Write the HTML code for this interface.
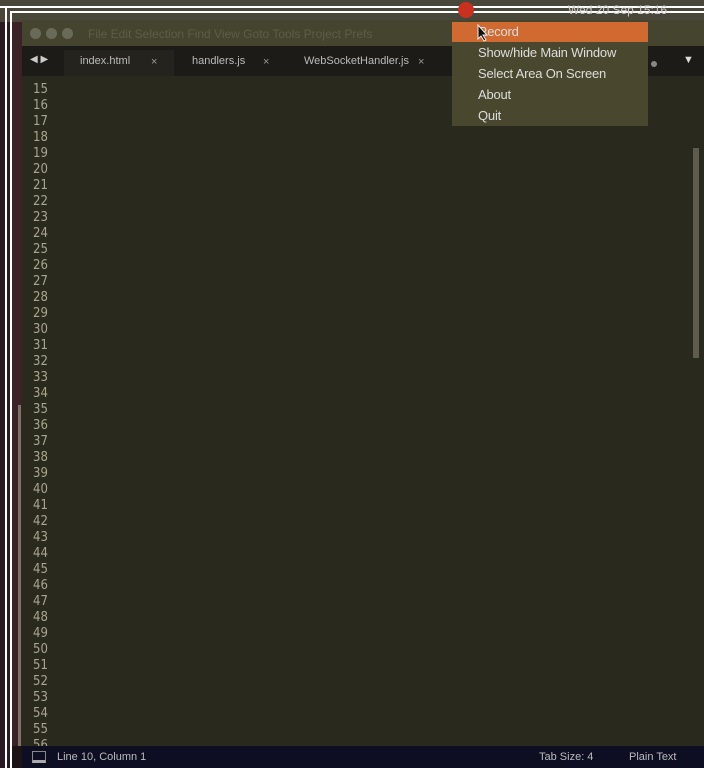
<!DOCTYPE html><html><head><style>
*{margin:0;padding:0;box-sizing:border-box}
body{width:704px;height:768px;background:#1a1414;position:relative;overflow:hidden;font-family:"Liberation Sans",sans-serif}
.a{position:absolute}
</style></head><body>
<div class="a" style="left:0;top:0;width:704px;height:22px;background:#48473a"></div>
<div class="a" style="left:0;top:22px;width:12px;height:746px;background:#2a1a22"></div>
<div class="a" style="left:12px;top:22px;width:10px;height:724px;background:#3a2226"></div>
<div class="a" style="left:18px;top:405px;width:3px;height:341px;background:#7a7468"></div>
<div class="a" style="left:22px;top:20px;width:682px;height:26px;background:#45452f"></div>
<div class="a" style="left:30px;top:28px;width:11px;height:11px;border-radius:50%;background:#6a6a5a"></div>
<div class="a" style="left:46px;top:28px;width:11px;height:11px;border-radius:50%;background:#6a6a5a"></div>
<div class="a" style="left:62px;top:28px;width:11px;height:11px;border-radius:50%;background:#6a6a5a"></div>
<div class="a" style="left:88px;top:27px;font-size:12px;color:#5e5e48;white-space:nowrap">File Edit Selection Find View Goto Tools Project Prefs</div>
<div class="a" style="left:22px;top:46px;width:682px;height:30px;background:#1c1b17"></div>
<div class="a" style="left:30px;top:54px;font-size:10px;color:#ccc">◀ ▶</div>
<div class="a" style="left:64px;top:50px;width:110px;height:26px;background:#24231e"></div>
<div class="a" style="left:80px;top:55px;font-size:11px;color:#bbb">index.html</div><div class="a" style="left:151px;top:56px;font-size:11px;color:#999">×</div>
<div class="a" style="left:192px;top:55px;font-size:11px;color:#bbb">handlers.js</div><div class="a" style="left:263px;top:56px;font-size:11px;color:#999">×</div>
<div class="a" style="left:304px;top:55px;font-size:11px;color:#bbb">WebSocketHandler.js</div><div class="a" style="left:418px;top:56px;font-size:11px;color:#999">×</div>
<div class="a" style="left:455px;top:55px;font-size:11px;color:#555">README.md</div>
<div class="a" style="left:578px;top:55px;font-size:11px;color:#555">untitled</div>
<div class="a" style="left:651px;top:61px;width:6px;height:6px;border-radius:50%;background:#888"></div>
<div class="a" style="left:683px;top:54px;font-size:11px;color:#ddd">▼</div>
<div class="a" style="left:22px;top:76px;width:682px;height:670px;background:#2a291e"></div>
<div class="a" style="left:693px;top:148px;width:6px;height:210px;background:#5e5c4c"></div>
<div class="a" style="left:33px;top:82px;font-size:13px;line-height:16px;color:#a8a690;font-family:'DejaVu Sans Condensed','Liberation Sans Narrow','Liberation Sans',sans-serif">15<br>16<br>17<br>18<br>19<br>20<br>21<br>22<br>23<br>24<br>25<br>26<br>27<br>28<br>29<br>30<br>31<br>32<br>33<br>34<br>35<br>36<br>37<br>38<br>39<br>40<br>41<br>42<br>43<br>44<br>45<br>46<br>47<br>48<br>49<br>50<br>51<br>52<br>53<br>54<br>55<br>56</div>
<div class="a" style="left:22px;top:746px;width:682px;height:22px;background:#0e0e22"></div>
<div class="a" style="left:32px;top:751px;width:14px;height:12px;border:1px solid #888;border-bottom:3px solid #aaa"></div>
<div class="a" style="left:57px;top:751px;font-size:11px;color:#bbb">Line 10, Column 1</div>
<div class="a" style="left:539px;top:751px;font-size:11px;color:#bbb">Tab Size: 4</div>
<div class="a" style="left:629px;top:751px;font-size:11px;color:#bbb">Plain Text</div>
<div class="a" style="left:0;top:6px;width:704px;height:2px;background:#fff"></div>
<div class="a" style="left:10px;top:11px;width:694px;height:2px;background:#fff"></div>
<div class="a" style="left:5px;top:6px;width:2px;height:762px;background:#fff"></div>
<div class="a" style="left:10px;top:11px;width:2px;height:757px;background:#fff"></div>
<div class="a" style="left:458px;top:2px;width:16px;height:16px;border-radius:50%;background:#c83020"></div>
<div class="a" style="left:568px;top:3px;font-size:12px;color:#ccc">Wed 20 Sep 15:16</div>
<div class="a" style="left:452px;top:22px;width:196px;height:104px;background:#49482e"></div>
<div class="a" style="left:452px;top:22px;width:196px;height:20px;background:#d06a30"></div>
<div class="a" style="left:478px;top:21px;font-size:13px;line-height:21px;color:#ddd;letter-spacing:-0.2px">Record<br>Show/hide Main Window<br>Select Area On Screen<br>About<br>Quit</div>
<svg class="a" style="left:477px;top:24px" width="12" height="18"><path d="M1 1 L1 15 L4 12 L7 17 L9 16 L6 11 L10 11 Z" fill="#111" stroke="#eee" stroke-width="1"/></svg>
</body></html>
